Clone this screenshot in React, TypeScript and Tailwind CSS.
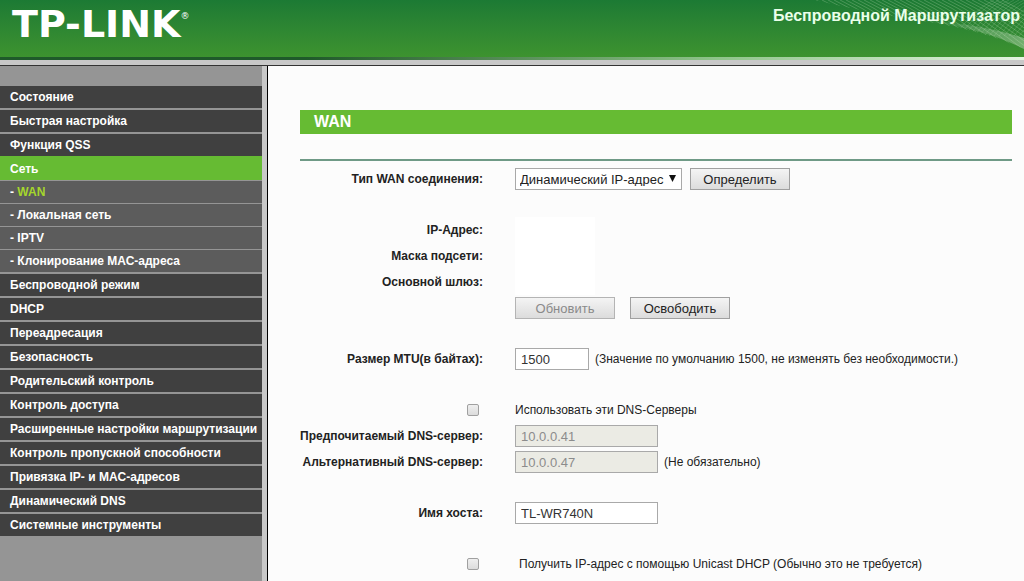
const menu = [
  { label: "Состояние" },
  { label: "Быстрая настройка" },
  { label: "Функция QSS" },
  { label: "Сеть", active: true, children: ["WAN", "Локальная сеть", "IPTV", "Клонирование МАС-адреса"] },
  { label: "Беспроводной режим" },
  { label: "DHCP" },
  { label: "Переадресация" },
  { label: "Безопасность" },
  { label: "Родительский контроль" },
  { label: "Контроль доступа" },
  { label: "Расширенные настройки маршрутизации" },
  { label: "Контроль пропускной способности" },
  { label: "Привязка IP- и MAC-адресов" },
  { label: "Динамический DNS" },
  { label: "Системные инструменты" },
];

const row = "grid min-h-[26px] grid-cols-[183px_1fr] items-center gap-x-8";
const rowLabel = "text-right font-bold";
const button =
  "h-[22px] w-[100px] border border-[#a0a0a0] bg-linear-to-b from-[#f4f4f4] to-[#dcdcdc] text-[13px] leading-none text-[#222] disabled:border-[#b4b4b4] disabled:text-[#8a8a8a]";
const textInput =
  "h-[22px] border border-[#a9a9a9] bg-white px-[5px] text-[13px] text-[#333] disabled:bg-[#ebebe4] disabled:text-[#8c8c8c]";
const checkbox =
  "mr-1 size-3 appearance-none rounded-xs border border-[#a0a0a0] bg-linear-to-b from-[#efefef] to-[#dcdcdc] checked:bg-[#4a4a4a]";

function Waves() {
  const lines = Array.from({ length: 34 }, (_, i) => i);
  return (
    <svg className="absolute top-0 right-0" width="220" height="57" viewBox="0 0 220 57" fill="none" aria-hidden="true">
      <defs>
        <linearGradient id="sweep" x1="0" y1="0" x2="1" y2="0">
          <stop offset="0" stopColor="#fff" stopOpacity="0" />
          <stop offset="1" stopColor="#fff" stopOpacity="0.3" />
        </linearGradient>
        <clipPath id="under">
          <path d="M10 0Q70 14 130 23Q180 31 220 49V0Z" />
        </clipPath>
      </defs>
      <path d="M110 20Q175 26 220 49V38Q170 22 110 20Z" fill="url(#sweep)" />
      <g clipPath="url(#under)" stroke="#d6f0c8" strokeWidth="0.7">
        <g strokeOpacity="0.35">
          {lines.map((i) => (
            <path key={i} d={`M${i * 6} 0Q${30 + i * 6} 14 ${76 + i * 6} 50`} />
          ))}
        </g>
        <g strokeOpacity="0.25">
          {lines.slice(0, 14).map((i) => (
            <path key={i} d={`M${190 + i * 5} 0Q${172 + i * 5} 8 ${150 + i * 5} 36`} />
          ))}
        </g>
      </g>
    </svg>
  );
}

function Header() {
  return (
    <header>
      <div className="relative flex h-[57px] items-start justify-between bg-linear-to-b from-[#1c7a34] to-[#3d932f] pr-1 pl-3">
        <Waves />
        <h1 className="relative flex items-start pt-1 font-['DejaVu_Sans',sans-serif] text-[38px] leading-10 font-bold text-white">
          TP-LINK
          <sup className="top-0 pt-2 text-[9px] leading-none font-normal">®</sup>
        </h1>
        <p className="relative pt-1 text-base font-bold text-[#eaffea]">Беспроводной Маршрутизатор</p>
      </div>
      <div className="h-[3px] bg-linear-to-r from-[#1f5a2a] from-30% via-[#8fc48a] via-70% to-[#e4f4e0]" />
      <div className="h-[5px] bg-[#c8c8c8]" />
      <div className="h-px bg-[#333]" />
    </header>
  );
}

function Sidebar() {
  return (
    <nav className="w-[268px] shrink-0 border-r border-black bg-[#c8c8c8] pr-[5px] text-xs font-bold text-white">
      <ul className="h-full bg-[#959595] pt-[18px]">
        {menu.map((item) => (
          <li key={item.label}>
            <a
              href="#"
              className={`block border-t-2 pl-[10px] leading-[22px] whitespace-nowrap ${item.active ? "border-[#66bb33] bg-[#66bb33]" : "border-[#959595] bg-[#404040]"}`}
            >
              {item.label}
            </a>
            {item.children && (
              <ul>
                {item.children.map((child) => (
                  <li key={child}>
                    <a href="#" className="block border-t border-[#959595] bg-[#5c5c5c] pl-[10px] leading-[22px]">
                      - <span className={child === "WAN" ? "text-[#a5d62c]" : ""}>{child}</span>
                    </a>
                  </li>
                ))}
              </ul>
            )}
          </li>
        ))}
      </ul>
    </nav>
  );
}

function WanForm() {
  return (
    <form className="flex flex-col gap-[25px] pt-[5px]">
      <div className={row}>
        <label htmlFor="type" className={rowLabel}>Тип WAN соединения:</label>
        <div className="flex items-center gap-2">
          <div className="relative">
            <select id="type" className="h-[22px] w-[167px] appearance-none border border-[#a9a9a9] bg-white pl-1 text-[13px] leading-none text-[#222]">
              <option>Динамический IP-адрес</option>
            </select>
            <svg className="pointer-events-none absolute top-[7px] right-[6px]" width="7" height="7" viewBox="0 0 7 7" aria-hidden="true">
              <path d="M0 0H7L3.5 7Z" fill="#111" />
            </svg>
          </div>
          <button type="button" className={button}>Определить</button>
        </div>
      </div>

      <div>
        <div className={row}>
          <span className={rowLabel}>IP-Адрес:</span>
          <span className="h-[26px] w-20 bg-white" />
        </div>
        <div className={row}>
          <span className={rowLabel}>Маска подсети:</span>
          <span className="h-[26px] w-20 bg-white" />
        </div>
        <div className={row}>
          <span className={rowLabel}>Основной шлюз:</span>
          <span className="h-[26px] w-20 bg-white" />
        </div>
        <div className={row}>
          <div className="col-start-2 flex gap-[15px]">
            <button type="button" disabled className={button}>Обновить</button>
            <button type="button" className={button}>Освободить</button>
          </div>
        </div>
      </div>

      <div className={row}>
        <label htmlFor="mtu" className={rowLabel}>Размер MTU(в байтах):</label>
        <div className="flex items-center gap-[6px]">
          <input id="mtu" defaultValue="1500" className={`${textInput} w-[74px]`} />
          <span>(Значение по умолчанию 1500, не изменять без необходимости.)</span>
        </div>
      </div>

      <div>
        <div className={row}>
          <input id="dns" type="checkbox" className={`${checkbox} justify-self-end`} />
          <label htmlFor="dns">Использовать эти DNS-Серверы</label>
        </div>
        <div className={row}>
          <label htmlFor="dns1" className={rowLabel}>Предпочитаемый DNS-сервер:</label>
          <input id="dns1" disabled defaultValue="10.0.0.41" className={`${textInput} w-[143px]`} />
        </div>
        <div className={row}>
          <label htmlFor="dns2" className={rowLabel}>Альтернативный DNS-сервер:</label>
          <div className="flex items-center gap-[6px]">
            <input id="dns2" disabled defaultValue="10.0.0.47" className={`${textInput} w-[143px]`} />
            <span>(Не обязательно)</span>
          </div>
        </div>
      </div>

      <div className={row}>
        <label htmlFor="host" className={rowLabel}>Имя хоста:</label>
        <input id="host" defaultValue="TL-WR740N" className={`${textInput} w-[143px]`} />
      </div>

      <div className={row}>
        <input id="unicast" type="checkbox" className={`${checkbox} justify-self-end`} />
        <label htmlFor="unicast" className="pl-1">Получить IP-адрес с помощью Unicast DHCP (Обычно это не требуется)</label>
      </div>
    </form>
  );
}

export default function App() {
  return (
    <div className="flex min-h-screen flex-col font-['Liberation_Sans',Arial,sans-serif]">
      <Header />
      <div className="flex flex-1">
        <Sidebar />
        <main className="flex-1 bg-[#fcfcfc] pt-11 pr-3 pl-8 text-xs text-[#222]">
          <h2 className="bg-[#66bb33] pl-[14px] text-base leading-6 font-bold text-white">WAN</h2>
          <hr className="mt-[25px] border-t-2 border-[#6f9a86]" />
          <WanForm />
        </main>
      </div>
    </div>
  );
}
